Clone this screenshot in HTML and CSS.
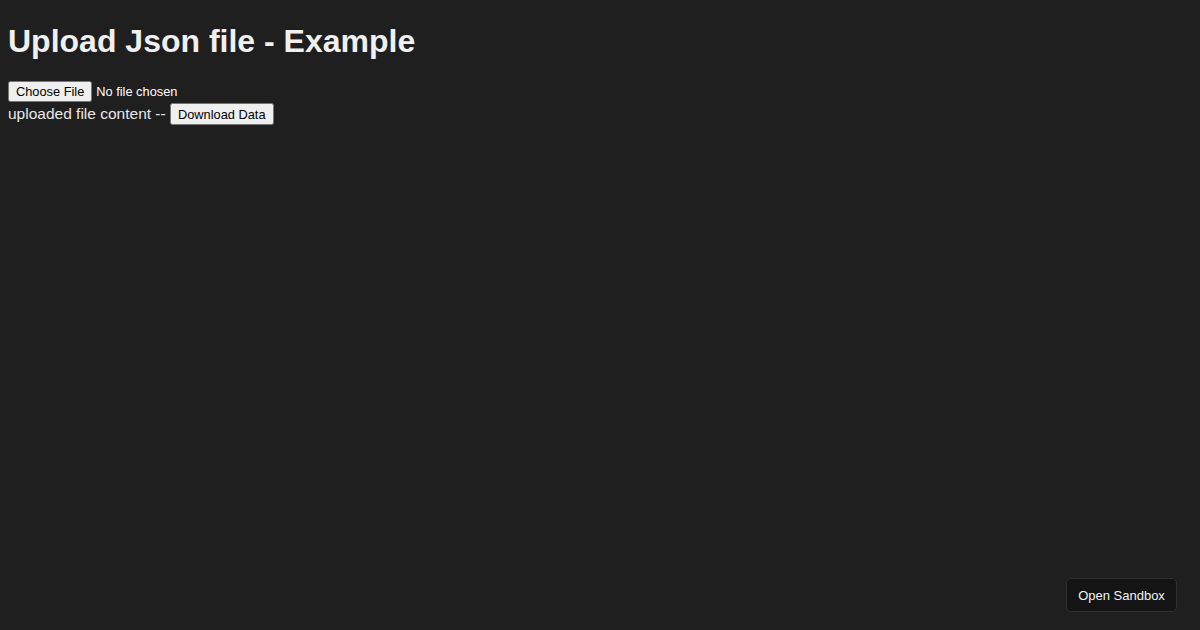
FILE: index.html
```html
<!DOCTYPE html>
<html>
<head>
<meta charset="utf-8">
<link rel="stylesheet" href="styles.css">
</head>
<body>
<h1 class="title">Upload Json file - Example</h1>
<input class="file" type="file">
<div class="row">uploaded file content -- <button class="btn">Download Data</button></div>
<a class="sandbox">Open Sandbox</a>
</body>
</html>
```

FILE: styles.css
```css
html {
  background: #1f1f1f;
}
body {
  margin: 8px;
  font-family: "Liberation Sans", Arial, sans-serif;
  color: #eeeeee;
}
.title {
  font-size: 32px;
  font-weight: bold;
  margin: 15px 0 21px;
  color: #f0f0f0;
}
.file {
  font-family: "Liberation Sans", Arial, sans-serif;
  font-size: 12.8px;
  color: #ffffff;
}
.file::file-selector-button {
  font-family: "Liberation Sans", Arial, sans-serif;
  font-size: 12.8px;
  color: #000;
  padding: 1px 6px;
  margin-right: 4px;
}
.row {
  font-size: 15.5px;
  color: #e8e8e8;
  padding-top: 1px;
}
.btn {
  font-family: "Liberation Sans", Arial, sans-serif;
  font-size: 12.8px;
  padding: 2px 6px 1px;
}
.sandbox {
  position: fixed;
  right: 23px;
  bottom: 18px;
  width: 111px;
  height: 34px;
  box-sizing: border-box;
  display: flex;
  align-items: center;
  justify-content: center;
  background: #141414;
  border: 1px solid #303030;
  border-radius: 5px;
  color: #f2f2f2;
  font-family: "Liberation Sans", Arial, sans-serif;
  font-size: 13px;
}
```
